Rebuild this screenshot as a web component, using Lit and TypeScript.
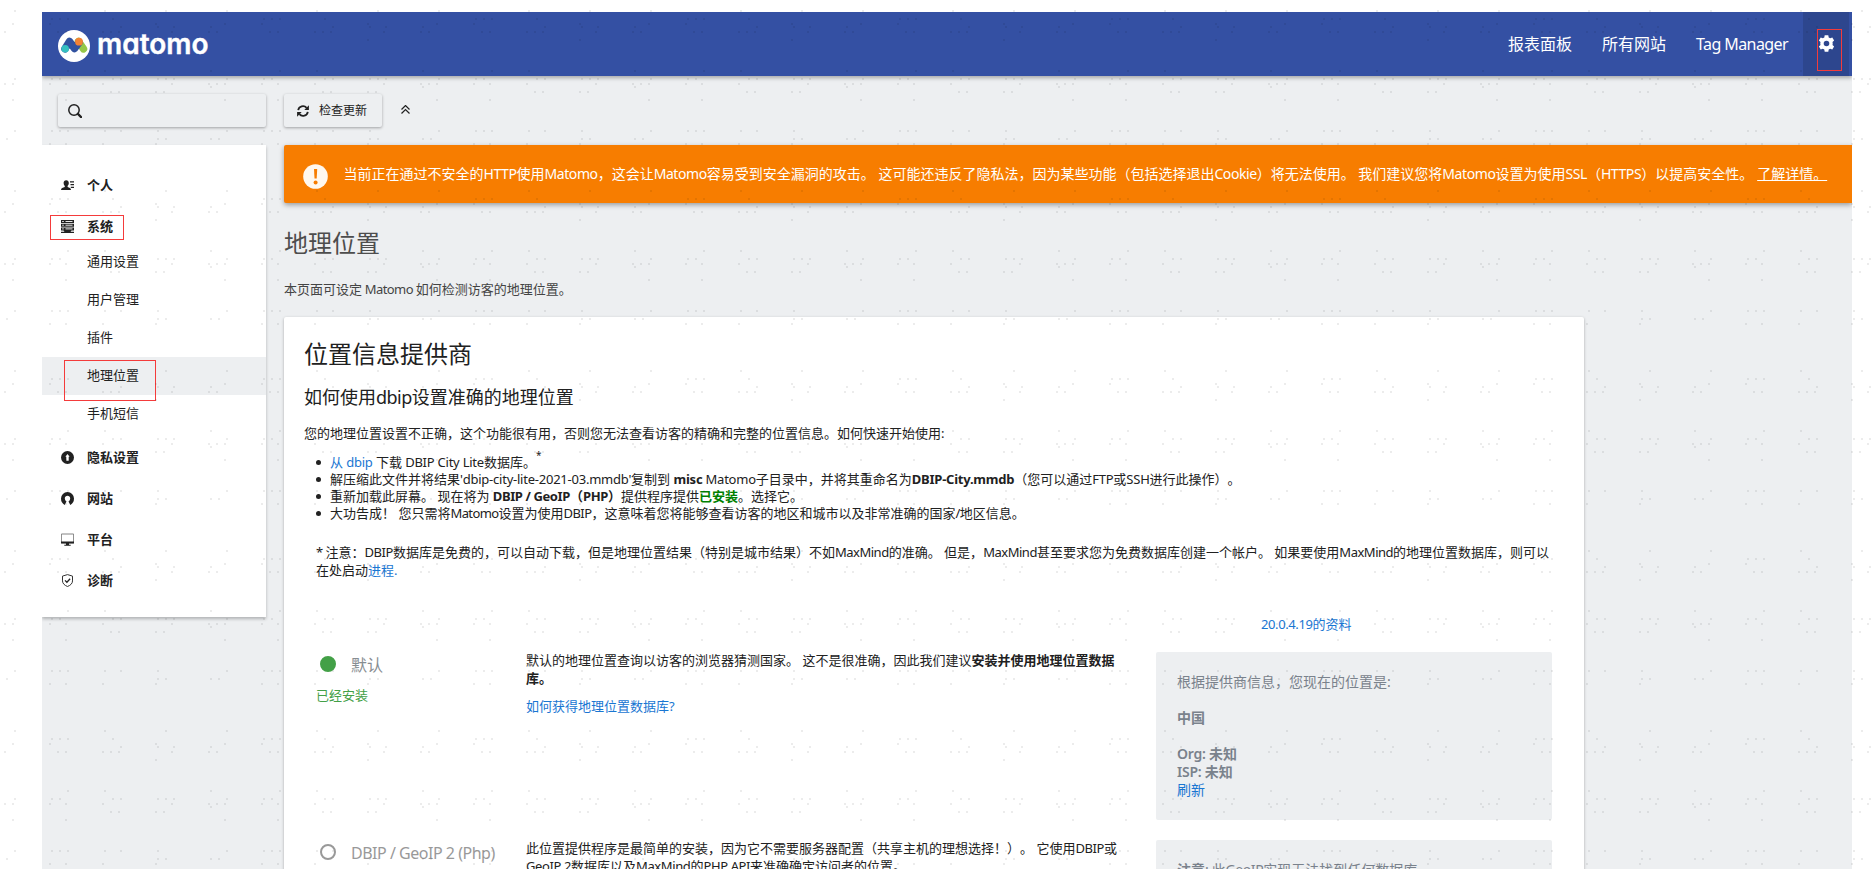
import { LitElement, html, css, svg } from "lit";
import { customElement } from "lit/decorators.js";

/** Wraps the Latin runs of a mixed string so that they can be tracked apart from the Chinese. */
const mix = (text: string) =>
  text
    .split(/([\x20-\x7e]+)/)
    .filter((s) => s)
    .map((s) => (/^[\x20-\x7e]+$/.test(s) && s.trim() ? html`<span class="la">${s}</span>` : s));

const icons = {
  user: svg`<path d="M5.2 1.2c1.6 0 2.6 1.1 2.6 2.8 0 1.3-.5 2.3-1.2 2.9v1.2c1.700.5 3.400 1 3.400 2.900H0C0 9.100 1.900 8.500 3.800 8V6.900C3 6.200 2.600 5.200 2.600 4c0-1.700 1-2.800 2.600-2.800z"/><path d="M9 2.200h4v1.200H9zM9.500 5h3.500v1.200H9.500zM9.800 7.800H13V9H9.800z"/>`,
  server: svg`<path d="M0 0h13v3H0zM0 3.700h13v3H0zM0 7.400h13v3H0zM2.500 10.400h8l-1 1.300H13V13H0v-1.300h3.500z"/><path d="M1.200 1.500h1.600M4.500 1.500h7M1.200 5.200h1.600M4.500 5.200h7M1.200 8.900h1.600M4.500 8.900h7" stroke="#fff" stroke-width=".9"/>`,
  privacy: svg`<circle cx="6.500" cy="6.500" r="6.500"/><path d="M6.500 3l2.100 2.700H7.700V9.800H5.300V5.700H4.400z" fill="#fff"/>`,
  site: svg`<path d="M6.500 1.900a4.600 4.600 0 0 0-4.600 4.600c0 2.200 1.200 3.900 2.700 4.700M6.500 1.900a4.600 4.600 0 0 1 4.600 4.600c0 2.200-1.200 3.900-2.700 4.700" fill="none" stroke="#212121" stroke-width="3.800"/>`,
  platform: svg`<path d="M.4 1h12.200v8.800H.4z" fill="none" stroke="#777" stroke-width=".9"/><path d="M0 8.600h13v1.800H0zM5 10.400h3v1.400h1.700v1H3.300v-1H5z"/>`,
  shield: svg`<path d="M6.500.6l5 1.500v4.800c0 2.600-2 4.400-5 5.600-3-1.200-5-3-5-5.600V2.100z" fill="none" stroke="#333" stroke-width="1"/><path d="M4 6.400l1.900 1.900 3.200-3.500" fill="none" stroke="#222" stroke-width="1.300"/>`,
};

const menuTop = [
  { icon: icons.user, label: "个人" },
  { icon: icons.server, label: "系统", marked: true },
];
const menuSub = ["通用设置", "用户管理", "插件", "地理位置", "手机短信"];
const menuBottom = [
  { icon: icons.privacy, label: "隐私设置" },
  { icon: icons.site, label: "网站" },
  { icon: icons.platform, label: "平台" },
  { icon: icons.shield, label: "诊断" },
];

/** Dot rows of the background texture: [y, x positions] inside a 212 by 180 tile. */
const dots: [number, number[]][] = [
  [11, [15, 105, 166]],
  [19, [52, 60, 68, 113]],
  [24, [13, 50, 156]],
  [27, [121, 158, 174, 211]],
  [32, [5, 58, 66, 103, 111, 119, 172, 209]],
  [40, [156]],
  [71, [68, 105, 211]],
  [79, [15, 52, 60, 113, 121, 158, 166, 174]],
  [84, [5, 13, 50, 66, 103, 172, 209]],
  [87, [211]],
  [92, [111, 119, 156, 164]],
  [100, [13, 66]],
  [131, [15, 52, 60, 68, 105, 121, 158]],
  [139, [7, 158, 166, 211]],
  [144, [50, 66, 103, 156]],
];

@customElement("app-root")
export class AppRoot extends LitElement {
  static styles = css`
    :host {
      display: block;
      position: relative;
      box-sizing: border-box;
      width: 1873px;
      height: 883px;
      padding: 12px 21px 14px 42px;
      overflow: hidden;
      background: #fff;
      color: #212121;
      font: 13px/18px "Noto Sans", "Noto Sans CJK SC", sans-serif;
      text-spacing-trim: space-all;
    }
    * { box-sizing: border-box; }
    p, h1, h2, h3, ul { margin: 0; padding: 0; font-weight: 400; }
    svg { display: block; }
    a { color: #1976d2; text-decoration: none; }
    .la { letter-spacing: -0.03em; }
    .tight .la { letter-spacing: -0.045em; }
    .note .la { letter-spacing: -0.037em; }
    .loose .la { letter-spacing: -0.018em; }
    .frame { height: 857px; overflow: hidden; background: #edeff1; white-space: nowrap; }
    .top {
      position: relative;
      display: flex;
      align-items: center;
      height: 64px;
      padding: 0 3px 0 16px;
      background: #3450a3;
      box-shadow: 0 2px 4px rgba(0, 0, 0, 0.3);
      color: #fff;
      font-size: 16px;
    }
    .brand { display: flex; align-items: center; gap: 7px; margin-top: 4px; }
    .word {
      font: 600 28px/32px Inter, sans-serif;
      font-feature-settings: "cv11";
      margin-top: -5px;
      -webkit-text-stroke: 0.4px #fff;
    }
    .links { display: flex; align-items: stretch; margin-left: auto; height: 64px; line-height: 64px; }
    .links a { color: #fff; margin-right: 30px; }
    .links a.tag { margin-right: 15px; width: 92px; }
    .links a.tag .la { letter-spacing: -0.036em; }
    .gear { position: relative; width: 46px; background: #2d468e; padding: 23px 0 0 15px; }
    .mark { position: absolute; border: 1px solid #f43b3b; }
    .gear .mark { left: 14px; top: 17px; width: 25px; height: 42px; }
    .body { display: grid; grid-template-columns: 224px 1568px; column-gap: 18px; }
    .search, .update {
      display: flex;
      align-items: center;
      height: 33px;
      border-radius: 2px;
      background: #edeff1;
      box-shadow: 0 1px 3px rgba(0, 0, 0, 0.32);
    }
    .search { margin: 18px 0 18px 16px; padding-left: 10px; }
    .nav { height: 472px; padding-top: 20px; background: #fff; box-shadow: 0 2px 3px rgba(0, 0, 0, 0.25); }
    .item {
      position: relative;
      display: flex;
      align-items: center;
      gap: 13px;
      height: 41px;
      padding-left: 19px;
      font-weight: 600;
    }
    .item span { margin-top: -1px; }
    .group { margin-bottom: -4px; }
    .item .mark { left: 8px; top: 9px; width: 74px; height: 25px; }
    .sub { position: relative; height: 38px; line-height: 36px; padding-left: 45px; }
    .on { background: #edeff1; }
    .sub .mark { left: 22px; top: 3px; width: 92px; height: 41px; }
    .rest { padding-top: 4px; }
    .tools { display: flex; align-items: center; height: 33px; margin: 18px 0; }
    .update { width: 98px; padding-left: 13px; gap: 10px; font-size: 12px; }
    .chev { margin: -2px 0 0 19px; }
    .alert {
      display: flex;
      align-items: center;
      gap: 15.5px;
      height: 58px;
      padding-left: 19px;
      border-radius: 2px 0 0 2px;
      background: #f77d00;
      box-shadow: 0 2px 5px rgba(0, 0, 0, 0.35);
      color: #fff;
      font-size: 14px;
    }
    .alert svg { margin-top: 5px; }
    .alert a { color: #fff; text-decoration: underline; margin-left: 4px; }
    h1 { margin-top: 22px; font-size: 24px; line-height: 36px; color: #4d4d4d; }
    .intro { margin-top: 19px; color: #444; line-height: 18px; }
    .card {
      width: 1300px;
      height: 600px;
      margin-top: 19px;
      padding: 19px 20px;
      border-radius: 2px;
      background: #fff;
      box-shadow: 0 1px 3px rgba(0, 0, 0, 0.3);
    }
    h2 { font-size: 24px; line-height: 36px; }
    h3 { font-size: 18px; line-height: 26px; margin-top: 12px; }
    .lead { margin-top: 14px; }
    ul { list-style: none; margin-top: 12px; line-height: 17px; }
    li { display: flex; height: 17px; }
    li::before { content: ""; width: 5px; height: 5px; border-radius: 50%; background: #212121; margin: 6px 9px 0 12px; }
    sup { font-size: 10px; line-height: 0; vertical-align: 8px; }
    .ok { color: #008000; }
    .note { margin: 21px 0 0 12px; }
    .grid { display: grid; grid-template-columns: 210px 630px 396px; margin: 36px 0 0 12px; row-gap: 20px; }
    .ip { grid-column: 3; padding-left: 105px; height: 17px; line-height: 18px; }
    .opt { display: flex; align-items: center; gap: 15px; height: 24px; padding-left: 4px; font-size: 16px; color: #878d92; }
    .plain { color: #999; }
    .radio { width: 16px; height: 16px; border-radius: 50%; border: 2px solid #999; margin-bottom: 3px; }
    .radio.sel { border-color: #43a047; background: #43a047; }
    .first { padding-top: 1px; }
    .state { color: #43a047; margin-top: 9px; }
    .desc { margin-top: -1px; }
    .more { margin-top: 10px; }
    .info { height: 168px; padding: 21px; border-radius: 2px; background: #edeff1; color: #7a828c; font-size: 14px; }
    .info b { font-weight: 600; }
    .gap { margin-top: 18px; }
    .dots { position: absolute; left: 0; top: 0; pointer-events: none; }
  `;

  private icon(content: unknown) {
    return html`<svg width="13" height="13" viewBox="0 0 13 13" fill="#212121">${content}</svg>`;
  }

  private item(entry: { icon: unknown; label: string; marked?: boolean }) {
    return html`<div class="item ${entry.marked ? "group" : ""}">
      ${this.icon(entry.icon)}<span>${entry.label}</span>${entry.marked ? html`<i class="mark"></i>` : ""}
    </div>`;
  }

  private header() {
    return html`<header class="top">
      <div class="brand">
        <svg width="32" height="32" viewBox="0 0 32 32">
          <circle cx="16" cy="16" r="16" fill="#fff" />
          <path d="M20.500 11.500L25.500 18.800" stroke="#95c748" stroke-width="7.500" stroke-linecap="round" />
          <path d="M7 18.800l4.500-7.300L16.500 18.500 21 12.500" fill="none" stroke="#3152a0" stroke-width="7.500" stroke-linecap="round" stroke-linejoin="round" />
          <circle cx="7.200" cy="18.800" r="3.800" fill="#35bfc0" />
          <circle cx="21" cy="11.700" r="3.900" fill="#f38334" />
        </svg>
        <span class="word">matomo</span>
      </div>
      <nav class="links">
        <a>报表面板</a><a>所有网站</a><a class="tag">${mix("Tag Manager")}</a>
        <div class="gear">
          <svg width="17" height="17" viewBox="0 0 17 17" fill="#fff">
            <path fill-rule="evenodd" d="M6.700.3h3.600l.4 2.100 1.500.8 2.100-.8 1.800 3.100-1.600 1.400a6 6 0 0 1 0 3.200l1.600 1.400-1.800 3.100-2.100-.8-1.500.8-.4 2.100H6.700l-.4-2.100-1.500-.8-2.100.8L.9 11.500l1.600-1.400a6 6 0 0 1 0-3.200L.9 5.500l1.800-3.100 2.100.8 1.500-.8zM8.500 5.700a2.800 2.800 0 1 0 0 5.600 2.800 2.800 0 0 0 0-5.600z" />
          </svg>
          <i class="mark"></i>
        </div>
      </nav>
    </header>`;
  }

  private aside() {
    return html`<aside>
      <div class="search">
        <svg width="14" height="14" viewBox="0 0 14 14" fill="none" stroke="#212121">
          <circle cx="6" cy="6" r="5.200" stroke-width="1.500" /><path d="M9.900 9.900l3.200 3.200" stroke-width="2.200" stroke-linecap="round" />
        </svg>
      </div>
      <div class="nav">
        ${menuTop.map((m) => this.item(m))}
        ${menuSub.map((s) => html`<div class="sub ${s === "地理位置" ? "on" : ""}">${s}${s === "地理位置" ? html`<i class="mark"></i>` : ""}</div>`)}
        <div class="rest">${menuBottom.map((m) => this.item(m))}</div>
      </div>
    </aside>`;
  }

  private providers() {
    return html`<div class="grid">
      <a class="ip">${mix("20.0.4.19的资料")}</a>
      <div class="first">
        <div class="opt"><i class="radio sel"></i>默认</div>
        <p class="state">已经安装</p>
      </div>
      <div class="desc">
        <p>默认的地理位置查询以访客的浏览器猜测国家。 这不是很准确，因此我们建议<b>安装并使用地理位置数据<br />库。</b></p>
        <p class="more"><a>${mix("如何获得地理位置数据库?")}</a></p>
      </div>
      <div class="info">
        <p>根据提供商信息，您现在的位置是:</p>
        <p class="gap"><b>中国</b></p>
        <p class="gap loose"><b>${mix("Org: ")}未知</b></p>
        <p class="loose"><b>${mix("ISP: ")}未知</b></p>
        <a>刷新</a>
      </div>
      <div class="first"><div class="opt plain"><i class="radio"></i><span>${mix("DBIP / GeoIP 2 (Php)")}</span></div></div>
      <p class="desc">${mix("此位置提供程序是最简单的安装，因为它不需要服务器配置（共享主机的理想选择！）。 它使用DBIP或")}<br />${mix("GeoIP 2数据库以及MaxMind的PHP API来准确确定访问者的位置。")}</p>
      <div class="info"><b>注意</b>${mix(": 此GeoIP实现无法找到任何数据库。")}</div>
    </div>`;
  }

  render() {
    return html`
      <div class="frame">
        ${this.header()}
        <div class="body">
          ${this.aside()}
          <main>
            <div class="tools">
              <div class="update">
                <svg width="12" height="12" viewBox="0 0 12 12" fill="none" stroke="#212121" stroke-width="1.800">
                  <path d="M1.200 5.200A4.800 4.800 0 0 1 9.600 2.900M10.800 6.800A4.800 4.800 0 0 1 2.400 9.100" />
                  <path d="M11.900.300v4.600H7.300zM.1 11.700V7.100h4.600z" fill="#212121" stroke="none" />
                </svg>
                检查更新
              </div>
              <svg class="chev" width="9" height="9" viewBox="0 0 9 9" fill="none" stroke="#212121" stroke-width="1.200"><path d="M.500 4.500l4-4 4 4M.500 8.500l4-4 4 4" /></svg>
            </div>
            <div class="alert">
              <svg width="25" height="25" viewBox="0 0 25 25">
                <circle cx="12.500" cy="12.500" r="12.300" fill="#fff8ee" />
                <path d="M11 5h3.200l-.5 9.500h-2.200z" fill="#f77d00" /><circle cx="12.600" cy="18.500" r="2" fill="#f77d00" />
              </svg>
              <span>${mix("当前正在通过不安全的HTTP使用Matomo，这会让Matomo容易受到安全漏洞的攻击。 这可能还违反了隐私法，因为某些功能（包括选择退出Cookie）将无法使用。 我们建议您将Matomo设置为使用SSL（HTTPS）以提高安全性。")}<a>了解详情。</a></span>
            </div>
            <h1>地理位置</h1>
            <p class="intro tight">${mix("本页面可设定 Matomo 如何检测访客的地理位置。")}</p>
            <section class="card">
              <h2>位置信息提供商</h2>
              <h3>${mix("如何使用dbip设置准确的地理位置")}</h3>
              <p class="lead">您的地理位置设置不正确，这个功能很有用，否则您无法查看访客的精确和完整的位置信息。如何快速开始使用:</p>
              <ul>
                <li class="loose"><span><a>${mix("从 dbip")}</a>${mix(" 下载 DBIP City Lite数据库。")}<sup>*</sup></span></li>
                <li class="loose"><span>${mix("解压缩此文件并将结果'dbip-city-lite-2021-03.mmdb'复制到 ")}<b>${mix("misc")}</b>${mix(" Matomo子目录中，并将其重命名为")}<b>${mix("DBIP-City.mmdb")}</b>${mix("（您可以通过FTP或SSH进行此操作）。")}</span></li>
                <li><span>重新加载此屏幕。 现在将为 <b>${mix("DBIP / GeoIP（PHP）")}</b>提供程序提供<b class="ok">已安装</b>。选择它。</span></li>
                <li class="tight"><span>${mix("大功告成！ 您只需将Matomo设置为使用DBIP，这意味着您将能够查看访客的地区和城市以及非常准确的国家/地区信息。")}</span></li>
              </ul>
              <p class="note">${mix("* 注意：DBIP数据库是免费的，可以自动下载，但是地理位置结果（特别是城市结果）不如MaxMind的准确。 但是，MaxMind甚至要求您为免费数据库创建一个帐户。 如果要使用MaxMind的地理位置数据库，则可以")}<br />在处启动<a>进程.</a></p>
              ${this.providers()}
            </section>
          </main>
        </div>
      </div>
      <svg class="dots" width="1873" height="883">
        <defs>
          <pattern id="tile" width="212" height="180" patternUnits="userSpaceOnUse">
            ${dots.map(([y, xs]) => xs.map((x) => svg`<rect x=${x - 1} y=${y - 1} width="2" height="2" />`))}
          </pattern>
        </defs>
        <rect width="1873" height="883" fill="url(#tile)" opacity=".075" />
      </svg>
    `;
  }
}
